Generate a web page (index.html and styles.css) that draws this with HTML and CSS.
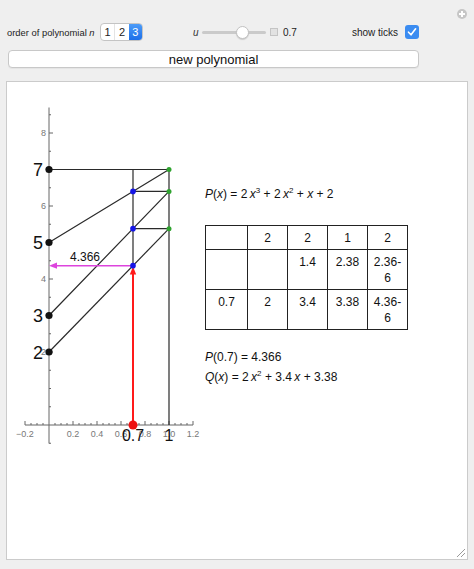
FILE: index.html
```html
<!DOCTYPE html>
<html>
<head>
<meta charset="utf-8">
<link rel="stylesheet" href="styles.css">
</head>
<body>
<div class="app">
  <span class="addbtn"></span>
  <div class="controls">
    <span class="lbl">order of polynomial <i>n</i></span>
    <div class="seg"><span>1</span><span>2</span><span class="on">3</span></div>
    <div class="slider">
      <i class="u">u</i>
      <div class="track"><div class="thumb"></div></div>
      <span class="plusbox"></span>
      <span class="val">0.7</span>
    </div>
    <div class="ticks">
      <span>show ticks</span>
      <span class="check"><svg width="10" height="10" viewBox="0 0 10 10"><path d="M1.5 5.2 L4 7.8 L8.6 1.8" fill="none" stroke="#fff" stroke-width="1.6" stroke-linecap="round" stroke-linejoin="round"/></svg></span>
    </div>
  </div>
  <button class="newpoly">new polynomial</button>
  <div class="panel">
    <svg class="plot" width="195" height="470" viewBox="7 82 195 470">
      <g stroke="#666" stroke-width="1" fill="none">
        <path d="M49 107.5 V443.5 M25 425 H193"/>
        <path d="M49 443.25h2 M49 406.75h2 M49 388.5h2 M49 370.25h2 M49 333.75h2 M49 315.5h2 M49 297.25h2 M49 260.75h2 M49 242.5h2 M49 224.25h2 M49 187.75h2 M49 169.5h2 M49 151.25h2 M49 114.75h2"/>
        <path d="M49 352h4 M49 279h4 M49 206h4 M49 133h4"/>
        <path d="M31 425v-2 M37 425v-2 M43 425v-2 M55 425v-2 M61 425v-2 M67 425v-2 M79 425v-2 M85 425v-2 M91 425v-2 M103 425v-2 M109 425v-2 M115 425v-2 M127 425v-2 M133 425v-2 M139 425v-2 M151 425v-2 M157 425v-2 M163 425v-2 M175 425v-2 M181 425v-2 M187 425v-2"/>
        <path d="M25 425v-4 M73 425v-4 M97 425v-4 M121 425v-4 M145 425v-4 M169 425v-4 M193 425v-4"/>
      </g>
      <g class="ticklbl" fill="#777" font-size="9">
        <text x="46" y="355" text-anchor="end">2</text>
        <text x="46" y="282" text-anchor="end">4</text>
        <text x="46" y="209" text-anchor="end">6</text>
        <text x="46" y="136" text-anchor="end">8</text>
        <text x="25" y="437" text-anchor="middle">−0.2</text>
        <text x="73" y="437" text-anchor="middle">0.2</text>
        <text x="97" y="437" text-anchor="middle">0.4</text>
        <text x="121" y="437" text-anchor="middle">0.6</text>
        <text x="145" y="437" text-anchor="middle">0.8</text>
        <text x="169" y="437" text-anchor="middle">1.0</text>
        <text x="193" y="437" text-anchor="middle">1.2</text>
      </g>
      <g stroke="#2a2a2a" stroke-width="1.2" fill="none">
        <path d="M49 169.5 H169 M133 169.5 V265.64 M169 169.5 V425"/>
        <path d="M49 242.5 L169 169.5 M133 191.4 H169"/>
        <path d="M49 315.5 L169 191.4 M133 228.63 H169"/>
        <path d="M49 352 L169 228.63"/>
      </g>
      <path d="M133 265.64 H56" stroke="#dd44dd" stroke-width="1.5"/>
      <polygon points="49,265.64 57,262.6 57,268.7" fill="#dd44dd"/>
      <path d="M133 425 V273" stroke="#ff1a1a" stroke-width="2"/>
      <polygon points="133,266.5 129.8,274.5 136.2,274.5" fill="#ff1a1a"/>
      <g fill="#111">
        <circle cx="49" cy="169.5" r="3.6"/>
        <circle cx="49" cy="242.5" r="3.6"/>
        <circle cx="49" cy="315.5" r="3.6"/>
        <circle cx="49" cy="352" r="3.6"/>
      </g>
      <g fill="#1515e6">
        <circle cx="133" cy="191.4" r="2.8"/>
        <circle cx="133" cy="228.63" r="2.8"/>
        <circle cx="133" cy="265.64" r="2.8"/>
      </g>
      <g fill="#2fa32f">
        <circle cx="169" cy="169.5" r="2.5"/>
        <circle cx="169" cy="191.4" r="2.5"/>
        <circle cx="169" cy="228.63" r="2.5"/>
      </g>
      <circle cx="133" cy="425" r="4.5" fill="#ee1111"/>
      <g class="big" fill="#111" font-size="18">
        <text x="43" y="176" text-anchor="end">7</text>
        <text x="43" y="249" text-anchor="end">5</text>
        <text x="43" y="322" text-anchor="end">3</text>
        <text x="43" y="358.5" text-anchor="end">2</text>
        <text x="133" y="441" text-anchor="middle" font-size="16">0.7</text>
        <text x="169" y="441" text-anchor="middle" font-size="16">1</text>
      </g>
      <text x="85" y="261" text-anchor="middle" font-size="12" fill="#111">4.366</text>
    </svg>
    <div class="info">
      <div class="eq"><i>P</i>(<i>x</i>) = 2&#8201;<i>x</i><sup>3</sup> + 2&#8201;<i>x</i><sup>2</sup> + <i>x</i> + 2</div>
      <table class="horner">
        <tr class="r1"><td></td><td>2</td><td>2</td><td>1</td><td>2</td></tr>
        <tr class="r2"><td></td><td></td><td>1.4</td><td>2.38</td><td>2.36-6</td></tr>
        <tr class="r2"><td>0.7</td><td>2</td><td>3.4</td><td>3.38</td><td>4.36-6</td></tr>
      </table>
      <div class="results">
        <div class="eq"><i>P</i>(0.7) = 4.366</div>
        <div class="eq"><i>Q</i>(<i>x</i>) = 2&#8201;<i>x</i><sup>2</sup> + 3.4&#8201;<i>x</i> + 3.38</div>
      </div>
    </div>
    <span class="grip"><svg width="12" height="12" viewBox="0 0 12 12"><path d="M11 3 L3 11 M11 7 L7 11" stroke="#9a9a9a" stroke-width="1"/></svg></span>
  </div>
</div>
</body>
</html>
```
FILE: styles.css
```css
* { box-sizing: border-box; }
html, body { margin: 0; }
body {
  background: #efefef;
  font-family: "Liberation Sans", Arial, sans-serif;
  color: #000;
  width: 474px;
  height: 569px;
  overflow: hidden;
}
.app {
  position: relative;
  padding-top: 23px;
  height: 569px;
}
.addbtn {
  position: absolute;
  left: 457px;
  top: 9px;
  width: 10px;
  height: 10px;
  border-radius: 50%;
  background: #c6c6c6;
}
.addbtn::before, .addbtn::after {
  content: "";
  position: absolute;
  background: #fff;
}
.addbtn::before { left: 2px; top: 4px; width: 6px; height: 2px; }
.addbtn::after { left: 4px; top: 2px; width: 2px; height: 6px; }

.controls {
  display: flex;
  align-items: center;
  margin-left: 7px;
  width: 412px;
  height: 18px;
  font-size: 10px;
  color: #222;
}
.lbl { width: 93px; white-space: nowrap; font-size: 9.4px; }
.seg {
  display: flex;
  width: 43px;
  height: 18px;
  border: 1px solid #c4c4c4;
  border-radius: 4px;
  background: #fff;
  overflow: hidden;
  font-size: 11px;
}
.seg span {
  flex: 1;
  display: flex;
  align-items: center;
  justify-content: center;
  border-left: 1px solid #e4e4e4;
}
.seg span:first-child { border-left: 0; }
.seg .on {
  background: linear-gradient(#4d9cf8, #1c6fe9);
  color: #fff;
  border-left: 0;
}
.slider {
  display: flex;
  align-items: center;
  margin-left: 50px;
}
.u { width: 9px; color: #333; }
.track {
  position: relative;
  width: 64px;
  height: 3px;
  background: #cacaca;
  border-radius: 2px;
}
.thumb {
  position: absolute;
  left: 34px;
  top: -5px;
  width: 13px;
  height: 13px;
  border-radius: 50%;
  background: #fff;
  border: 1px solid #c2c2c2;
  box-shadow: 0 1px 1px rgba(0, 0, 0, 0.15);
}
.plusbox {
  width: 8px;
  height: 8px;
  margin-left: 4px;
  border: 1px solid #c4c4c4;
  background: #e2e2e2;
}
.val { margin-left: 5px; }
.ticks {
  margin-left: auto;
  display: flex;
  align-items: center;
}
.check {
  margin-left: 7px;
  width: 14px;
  height: 14px;
  border-radius: 3px;
  background: #3b8cf1;
  display: flex;
  align-items: center;
  justify-content: center;
}
.newpoly {
  display: block;
  margin: 9px 0 0 8px;
  width: 411px;
  height: 18px;
  padding: 0;
  background: #fff;
  border: 1px solid #c8c8c8;
  border-radius: 4px;
  font-family: "Liberation Sans", Arial, sans-serif;
  font-size: 13px;
  color: #111;
  box-shadow: 0 1px 0 rgba(0, 0, 0, 0.04);
}
.panel {
  position: relative;
  display: flex;
  margin: 13px 0 0 6px;
  width: 462px;
  height: 479px;
  background: #fff;
  border: 1px solid #cbcbcb;
}
.plot {
  flex: none;
  display: block;
  font-family: "Liberation Sans", Arial, sans-serif;
}
.info {
  flex: none;
  padding: 104px 0 0 3px;
  font-size: 12px;
  color: #111;
}
.eq {
  line-height: 16px;
  white-space: nowrap;
}
.eq sup {
  font-size: 8px;
  line-height: 0;
  vertical-align: 5px;
}
.horner {
  margin-top: 23px;
  border-collapse: collapse;
  table-layout: fixed;
  width: 202px;
}
.horner td {
  width: 40px;
  padding: 4px 3px 3px;
  border: 1.5px solid #222;
  text-align: center;
  vertical-align: top;
  line-height: 16px;
  word-break: break-all;
}
.horner td:first-child { width: 42px; }
.horner .r1 td { height: 24px; }
.horner .r2 td { height: 39px; }
.results {
  margin-top: 17px;
}
.results .eq { line-height: 20px; }
.grip {
  position: absolute;
  right: 1px;
  bottom: 1px;
  width: 12px;
  height: 12px;
  display: block;
}
.grip svg { display: block; }
```
